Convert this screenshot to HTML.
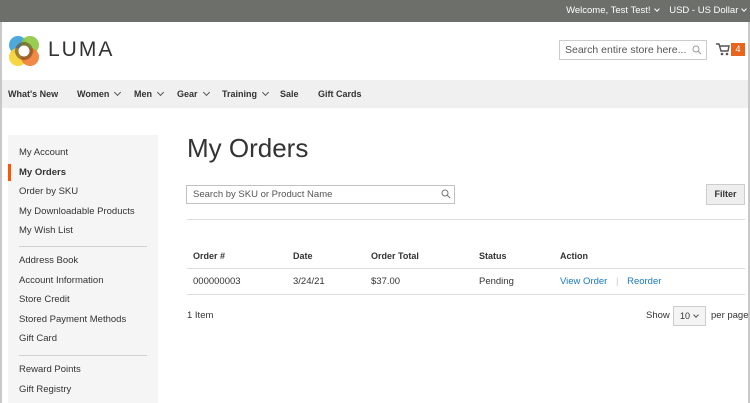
<!DOCTYPE html>
<html><head><style>
*{margin:0;padding:0;box-sizing:border-box}
body{width:750px;height:403px;overflow:hidden;background:#fff;font-family:"Liberation Sans",sans-serif;color:#333;position:relative;font-size:9px}
.a{position:absolute;white-space:nowrap}
.b{font-weight:bold}
.chev{display:inline-block;width:5px;height:5px;border-right:1px solid #555;border-bottom:1px solid #555;transform:rotate(45deg);margin-left:6px;position:relative;top:-2px}
</style></head><body>
<div class="a" style="left:0;top:0;width:750px;height:22px;background:#6d6f6b"></div>
<div class="a" style="right:4px;top:5px;color:#fff;font-size:9.5px">Welcome, Test Test! <span class="chev" style="border-color:#fff;width:4px;height:4px;margin-left:2px;margin-right:10px"></span>USD - US Dollar <span class="chev" style="border-color:#fff;width:4px;height:4px;margin-left:1px"></span></div>
<div class="a" style="left:0;top:22px;width:2px;height:381px;background:#c8c8c8"></div>
<div class="a" style="left:748px;top:22px;width:2px;height:381px;background:#c8c8c8"></div>
<svg class="a" style="left:8px;top:35px" width="32" height="32" viewBox="0 0 32 32">
<circle cx="10" cy="10" r="9" fill="#3aa0d8" opacity=".9"/><circle cx="22" cy="10" r="9" fill="#8dc63f" opacity=".9"/>
<circle cx="10" cy="22" r="9" fill="#f6d130" opacity=".9"/><circle cx="22" cy="22" r="9" fill="#ef7d32" opacity=".9"/>
<circle cx="16" cy="16" r="9" fill="#6b4a24" opacity=".6"/><circle cx="16" cy="16" r="5.5" fill="#fff"/></svg>
<div class="a" style="left:48px;top:38px;font-size:21px;letter-spacing:2px;color:#333">LUMA</div>
<div class="a" style="left:559px;top:40px;width:148px;height:20px;border:1px solid #ccc;font-size:10.5px;color:#555;padding:3px 5px">Search entire store here...</div>
<svg class="a" style="left:692px;top:45px" width="10" height="10"><circle cx="4" cy="4" r="3" fill="none" stroke="#999"/><line x1="6" y1="6" x2="9" y2="9" stroke="#999"/></svg>
<svg class="a" style="left:716px;top:43px" width="14" height="13"><path d="M0 1h3l2 7h7l1-5H4" fill="none" stroke="#555" stroke-width="1.4"/><circle cx="6" cy="11" r="1.3" fill="#555"/><circle cx="11" cy="11" r="1.3" fill="#555"/></svg>
<div class="a" style="left:731px;top:43px;width:14px;height:13px;background:#e9641d;color:#fff;font-size:9px;text-align:center;line-height:13px">4</div>
<div class="a" style="left:2px;top:80px;width:746px;height:28px;background:#f0f0f0"></div>
<div class="a b" style="left:8px;top:89px">What's New</div>
<div class="a b" style="left:77px;top:89px">Women<span class="chev"></span></div>
<div class="a b" style="left:134px;top:89px">Men<span class="chev"></span></div>
<div class="a b" style="left:177px;top:89px">Gear<span class="chev"></span></div>
<div class="a b" style="left:222px;top:89px">Training<span class="chev"></span></div>
<div class="a b" style="left:280px;top:89px">Sale</div>
<div class="a b" style="left:318px;top:89px">Gift Cards</div>
<div class="a" style="left:8px;top:135px;width:150px;height:268px;background:#f5f5f5"></div>
<div class="a" style="left:8px;top:164px;width:3px;height:17px;background:#ff5501"></div>
<div class="a" style="left:19px;top:143px;line-height:19.6px;font-size:9.5px">My Account<br><b>My Orders</b><br>Order by SKU<br>My Downloadable Products<br>My Wish List</div>
<div class="a" style="left:19px;top:246px;width:128px;height:1px;background:#d1d1d1"></div>
<div class="a" style="left:19px;top:251px;line-height:19.6px;font-size:9.5px">Address Book<br>Account Information<br>Store Credit<br>Stored Payment Methods<br>Gift Card</div>
<div class="a" style="left:19px;top:355px;width:128px;height:1px;background:#d1d1d1"></div>
<div class="a" style="left:19px;top:360px;line-height:19.6px;font-size:9.5px">Reward Points<br>Gift Registry</div>
<div class="a" style="left:187px;top:133px;font-size:26px;color:#333">My Orders</div>
<div class="a" style="left:186px;top:185px;width:269px;height:19px;border:1px solid #c2c2c2;padding:3px 6px;color:#555;font-size:9.5px">Search by SKU or Product Name</div>
<svg class="a" style="left:441px;top:189px" width="10" height="10"><circle cx="4" cy="4" r="3" fill="none" stroke="#777"/><line x1="6" y1="6" x2="9" y2="9" stroke="#777"/></svg>
<div class="a b" style="left:706px;top:184px;width:39px;height:21px;background:#eee;border:1px solid #cdcdcd;text-align:center;line-height:19px;color:#333">Filter</div>
<div class="a" style="left:187px;top:219px;width:558px;height:1px;background:#ddd"></div>
<div class="a b" style="left:193px;top:251px">Order #</div>
<div class="a b" style="left:293px;top:251px">Date</div>
<div class="a b" style="left:371px;top:251px">Order Total</div>
<div class="a b" style="left:479px;top:251px">Status</div>
<div class="a b" style="left:560px;top:251px">Action</div>
<div class="a" style="left:187px;top:268px;width:558px;height:1px;background:#ddd"></div>
<div class="a" style="left:193px;top:276px;font-size:9.5px">000000003</div>
<div class="a" style="left:293px;top:276px;font-size:9.5px">3/24/21</div>
<div class="a" style="left:371px;top:276px;font-size:9.5px">$37.00</div>
<div class="a" style="left:479px;top:276px;font-size:9.5px">Pending</div>
<div class="a" style="left:560px;top:276px;color:#1979c3;font-size:9.5px">View Order <span style="color:#ccc;margin:0 6px">|</span> Reorder</div>
<div class="a" style="left:187px;top:294px;width:558px;height:1px;background:#ddd"></div>
<div class="a" style="left:187px;top:310px;font-size:9.5px">1 Item</div>
<div class="a" style="left:646px;top:310px;font-size:9.5px">Show</div>
<div class="a" style="left:673px;top:306px;width:33px;height:20px;background:#f4f4f4;border:1px solid #ccc;padding:4px 6px">10<span class="chev" style="width:4px;height:4px;margin-left:4px"></span></div>
<div class="a" style="left:711px;top:310px;font-size:9.5px">per page</div>
</body></html>
